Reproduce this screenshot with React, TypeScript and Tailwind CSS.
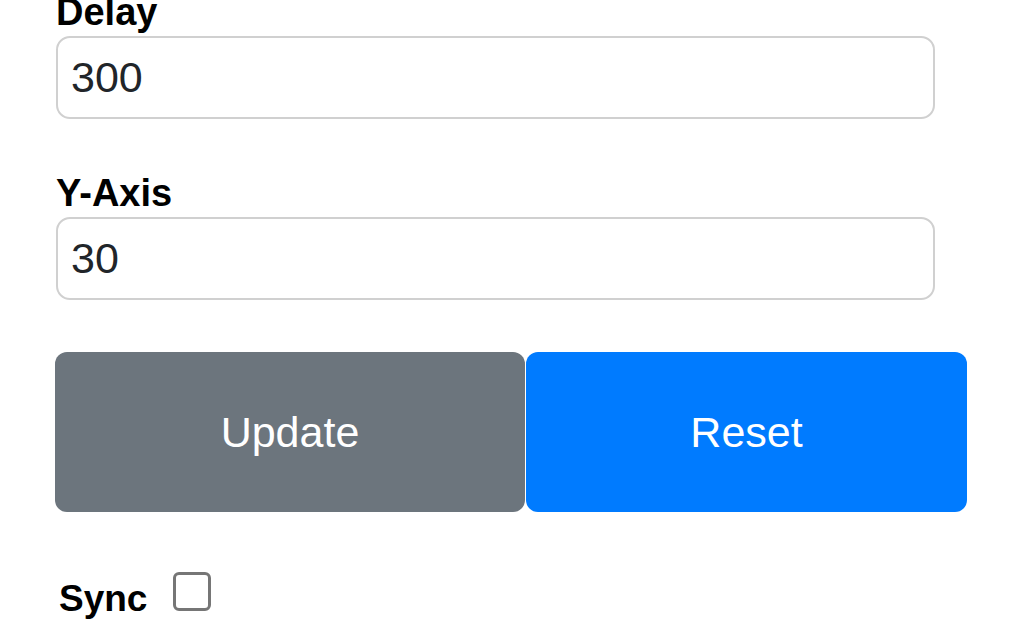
import React, { useState } from 'react';

const FONT = "font-['Liberation_Sans',Arial,sans-serif]";

function Field({
  label,
  value,
  onChange,
  className,
}: {
  label: string;
  value: string;
  onChange: (v: string) => void;
  className?: string;
}) {
  return (
    <div className={`flex flex-col ${className ?? ''}`}>
      <label className="text-[38px] font-bold leading-[44px] text-black">{label}</label>
      <input
        type="text"
        value={value}
        onChange={(e) => onChange(e.target.value)}
        className="mt-[2px] w-[879px] h-[83px] rounded-[14px] border-2 border-[#d0d0d0] bg-white pl-[13px] text-[43px] text-[#212529] outline-none"
      />
    </div>
  );
}

export default function App() {
  const [delay, setDelay] = useState('300');
  const [yAxis, setYAxis] = useState('30');
  const [sync, setSync] = useState(false);

  return (
    <div className={`h-[638px] overflow-hidden bg-white ${FONT}`}>
      <div className="-mt-[10px] pl-[56px] flex flex-col">
        <Field label="Delay" value={delay} onChange={setDelay} />
        <Field label="Y-Axis" value={yAxis} onChange={setYAxis} className="mt-[52px]" />

        <div className="mt-[52px] -ml-px flex">
          <button className="w-[470px] h-[160px] rounded-[12px] bg-[#6c757d] text-[43px] text-white">
            Update
          </button>
          <button
            className="ml-px w-[441px] h-[160px] rounded-[12px] bg-[#007bff] text-[43px] text-white"
            onClick={() => {
              setDelay('300');
              setYAxis('30');
            }}
          >
            Reset
          </button>
        </div>

        <div className="mt-[60px] flex items-start">
          <span className="ml-[3px] mt-[5px] text-[37px] font-bold leading-[44px] text-black">Sync</span>
          <input
            type="checkbox"
            checked={sync}
            onChange={(e) => setSync(e.target.checked)}
            className="ml-[26px] w-[38px] h-[39px] appearance-none rounded-[6px] border-[3px] border-[#767676] bg-white checked:bg-[#007bff]"
          />
        </div>
      </div>
    </div>
  );
}
